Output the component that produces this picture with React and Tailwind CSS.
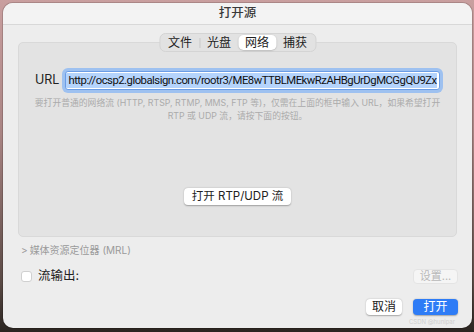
import React from "react";

export default function App() {
  const font = { fontFamily: 'Inter, "Noto Sans CJK SC", sans-serif' };
  return (
    <div
      className="w-[474px] h-[332px] overflow-hidden flex flex-col bg-[linear-gradient(180deg,#c99f9f_0%,#a98483_40%,#5a4a45_85%,#2a2420_100%)]"
      style={font}
    >
      <div className="mx-[3px] mt-[3px] w-[469px] h-[325px] rounded-[10px] bg-[#ededed] flex flex-col overflow-hidden shadow-[0_0_0_1px_rgba(0,0,0,0.15)]">
        {/* Title bar */}
        <div className="h-[22px] flex items-center justify-center bg-[#f3f3f3] border-b border-[#d8d8d8] text-[12.5px] font-medium text-[#3a3a3a]">
          打开源
        </div>
        {/* Content */}
        <div className="flex-1 flex flex-col px-[15px] pt-[8px]">
          <div className="relative">
            <div className="absolute left-1/2 -translate-x-1/2 top-0 z-10 flex items-center h-[19px] rounded-[6px] bg-[#e2e2e2] border border-[#d4d4d4] px-[1px] text-[12px] text-[#222]">
              <div className="px-[7px] leading-[17px]">文件</div>
              <div className="w-px h-[10px] bg-[#c8c8c8]" />
              <div className="px-[7px] leading-[17px]">光盘</div>
              <div className="px-[7px] leading-[15px] rounded-[5px] bg-white shadow-[0_0.5px_1.5px_rgba(0,0,0,0.25)]">网络</div>
              <div className="px-[7px] leading-[17px]">捕获</div>
            </div>
            <div className="mt-[9px] h-[195px] rounded-[5px] bg-[#e3e3e3] border border-[#d9d9d9] flex flex-col items-center pt-[28px]">
              <div className="flex items-center w-full pl-[16px] pr-[16px]">
                <span className="text-[12.5px] text-[#222] mr-[6px]">URL</span>
                <div className="flex-1 h-[19px] bg-white rounded-[3px] ring-[3px] ring-[#9ec1f0] border border-[#6b9de6] flex items-center overflow-hidden">
                  <span
                    className="bg-[#b5d4fc] text-[11.3px] leading-[15px] text-[#111] whitespace-nowrap pl-[2px] tracking-[-0.5px]"
                    style={{ fontFamily: 'Roboto, sans-serif' }}
                  >
                    http://ocsp2.globalsign.com/rootr3/ME8wTTBLMEkwRzAHBgUrDgMCGgQU9Zx
                  </span>
                </div>
              </div>
              <div className="mt-[6px] text-[8.8px] leading-[13px] text-[#ababab] text-center whitespace-nowrap">
                要打开普通的网络流 (HTTP, RTSP, RTMP, MMS, FTP 等)，仅需在上面的框中输入 URL，如果希望打开
                <br />
                RTP 或 UDP 流，请按下面的按钮。
              </div>
              <div className="mt-[66px] h-[17px] px-[8px] bg-white rounded-[4px] shadow-[0_0.5px_1.5px_rgba(0,0,0,0.3)] text-[11.5px] leading-[17px] text-[#222]">
                打开 RTP/UDP 流
              </div>
            </div>
          </div>
          <div className="mt-[6px] pl-[3px] text-[10px] text-[#9a9a9a] flex items-center">
            <span className="mr-[2px]">&gt;</span>媒体资源定位器 (MRL)
          </div>
          <div className="mt-[9px] flex items-center justify-between">
            <div className="flex items-center">
              <div className="w-[11px] h-[11px] rounded-[3px] bg-white border border-[#d0d0d0] ml-[3px]" />
              <span className="ml-[6px] text-[12.5px] text-[#222]">流输出:</span>
            </div>
            <div className="h-[15px] w-[45px] mr-[-1px] rounded-[4px] bg-[#f5f5f5] border border-[#e4e4e4] text-[11px] leading-[13px] text-[#b8b8b8] text-center">
              设置...
            </div>
          </div>
          <div className="mt-[13px] flex items-center justify-end gap-[11px]">
            <div className="h-[16px] w-[36px] rounded-[4px] bg-white shadow-[0_0.5px_1.5px_rgba(0,0,0,0.3)] text-[12px] leading-[16px] text-[#222] text-center">
              取消
            </div>
            <div className="h-[16px] w-[45px] mr-[-1px] rounded-[4px] bg-[#2e7cf6] shadow-[0_0.5px_1.5px_rgba(0,0,0,0.3)] text-[12px] leading-[16px] text-white text-center">
              打开
            </div>
          </div>
          <div className="flex justify-end mt-[2px] text-[6px] text-[#d0d0d0] pr-[2px]">CSDN @hunipar</div>
        </div>
      </div>
    </div>
  );
}
